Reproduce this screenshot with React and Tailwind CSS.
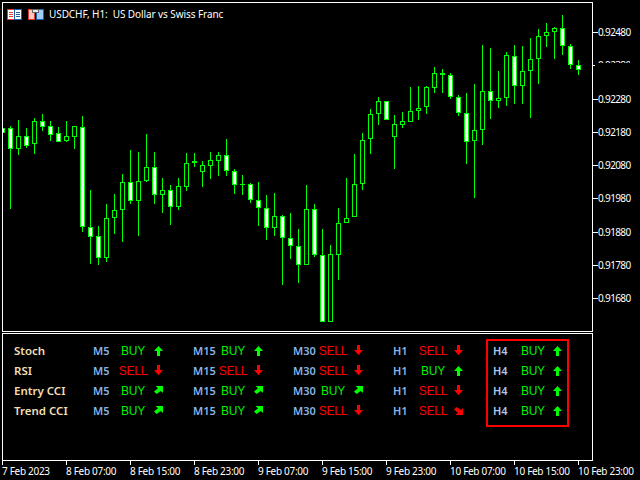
const candles = [
  [2, 120, 140, 128, 133, 1],
  [10, 126, 209, 128, 149, 1],
  [18, 120, 155, 136, 149, 0],
  [26, 128, 148, 136, 146, 1],
  [34, 118, 154, 121, 144, 0],
  [42, 114, 131, 121, 127, 1],
  [50, 121, 141, 126, 135, 1],
  [58, 127, 142, 133, 142, 1],
  [66, 121, 142, 136, 141, 0],
  [74, 126, 149, 126, 137, 0],
  [82, 116, 232, 127, 227, 1],
  [90, 190, 264, 227, 237, 1],
  [98, 226, 265, 236, 258, 1],
  [106, 204, 262, 218, 258, 0],
  [114, 194, 234, 210, 218, 0],
  [122, 174, 242, 182, 210, 0],
  [130, 150, 204, 182, 201, 1],
  [138, 152, 236, 181, 201, 0],
  [146, 134, 182, 167, 181, 0],
  [154, 152, 204, 167, 195, 1],
  [162, 178, 213, 190, 195, 0],
  [170, 185, 225, 190, 207, 1],
  [178, 178, 210, 186, 207, 0],
  [186, 153, 191, 163, 187, 0],
  [194, 153, 167, 161, 163, 0],
  [202, 161, 187, 165, 172, 0],
  [210, 152, 179, 160, 166, 0],
  [218, 152, 176, 155, 161, 0],
  [226, 139, 176, 155, 171, 1],
  [234, 169, 194, 171, 185, 1],
  [242, 175, 195, 184, 185, 2],
  [250, 183, 203, 184, 200, 1],
  [258, 182, 226, 200, 208, 1],
  [266, 195, 240, 208, 228, 1],
  [274, 193, 236, 216, 228, 0],
  [282, 215, 285, 216, 238, 1],
  [290, 213, 259, 238, 246, 1],
  [298, 229, 283, 246, 265, 1],
  [306, 185, 265, 209, 265, 0],
  [314, 204, 257, 209, 255, 1],
  [322, 229, 322, 255, 322, 1],
  [330, 245, 322, 254, 322, 0],
  [338, 208, 280, 223, 255, 0],
  [346, 178, 223, 218, 223, 0],
  [354, 154, 217, 184, 217, 0],
  [362, 133, 190, 140, 184, 0],
  [370, 109, 154, 114, 139, 0],
  [378, 97, 125, 101, 114, 0],
  [386, 101, 120, 101, 120, 1],
  [394, 115, 169, 124, 137, 0],
  [402, 112, 128, 121, 125, 0],
  [410, 87, 122, 111, 122, 0],
  [418, 86, 120, 108, 111, 0],
  [426, 86, 114, 87, 107, 0],
  [434, 67, 93, 73, 88, 0],
  [442, 69, 93, 73, 75, 1],
  [450, 73, 99, 75, 97, 1],
  [458, 95, 116, 97, 113, 1],
  [466, 93, 164, 113, 142, 1],
  [474, 84, 198, 130, 141, 0],
  [482, 45, 145, 91, 130, 0],
  [490, 48, 119, 91, 101, 1],
  [498, 71, 108, 98, 101, 0],
  [506, 52, 106, 55, 98, 0],
  [514, 45, 104, 56, 86, 1],
  [522, 46, 104, 71, 86, 0],
  [530, 38, 118, 59, 71, 0],
  [538, 29, 84, 36, 59, 0],
  [546, 23, 47, 32, 36, 0],
  [554, 27, 59, 28, 32, 0],
  [562, 15, 55, 28, 46, 1],
  [570, 44, 69, 46, 65, 1],
  [578, 60, 75, 65, 70, 1],
];

const prices = ["0.92480", "0.92380", "0.92280", "0.92180", "0.92080", "0.91980", "0.91880", "0.91780", "0.91680"];
const times = ["7 Feb 2023", "8 Feb 07:00", "8 Feb 15:00", "8 Feb 23:00", "9 Feb 07:00", "9 Feb 15:00", "9 Feb 23:00", "10 Feb 07:00", "10 Feb 15:00", "10 Feb 23:00"];

const ui = { fontFamily: '"Noto Sans", sans-serif' };

const arrows = {
  up: { c: "#00ff00", w: 9, h: 10, cls: "block", d: "M4.5 0 L9 5 L6 5 L6 10 L3 10 L3 5 L0 5 Z" },
  down: { c: "#ff0000", w: 9, h: 10, cls: "block mb-[3px]", d: "M3 0 L6 0 L6 5 L9 5 L4.5 10 L0 5 L3 5 Z" },
  ne: { c: "#00ff00", w: 9, h: 8, cls: "block mb-[2px]", d: "M1.5 0 L9 0 L9 7 L6.8 5 L2.6 8 L0 5.6 L4 2.2 Z" },
  se: { c: "#ff0000", w: 9, h: 8, cls: "block mb-[1px]", d: "M0 2.4 L2.6 0 L6.8 3 L9 1 L9 8 L1.5 8 L4 5.8 Z" },
};

function Arrow({ k }) {
  const a = arrows[k];
  return (
    <svg width={a.w} height={a.h} viewBox={`0 0 ${a.w} ${a.h}`} className={a.cls}>
      <path d={a.d} fill={a.c} />
    </svg>
  );
}

function Chart() {
  return (
    <svg width="589" height="328" viewBox="3 3 589 328" className="block" shapeRendering="crispEdges">
      {candles.map(([x, hi, lo, top, bot, kind]) => (
        <g key={x}>
          <rect x={x} y={hi} width="1" height={lo - hi} fill="#00ff00" />
          {kind === 2 ? (
            <rect x={x - 2} y={top} width="5" height={bot - top} fill="#00ff00" />
          ) : (
            <rect
              x={x - 1.5}
              y={top + 0.5}
              width="4"
              height={Math.max(bot - top - 1, 1)}
              fill={kind === 1 ? "#ffffff" : "#000000"}
              stroke="#00ff00"
              strokeWidth="1"
            />
          )}
        </g>
      ))}
    </svg>
  );
}

function BookIcon() {
  return (
    <svg width="15" height="11" viewBox="0 0 15 11" className="block" shapeRendering="crispEdges">
      <rect x="0.5" y="0.5" width="7" height="10" fill="#fff" stroke="#e03a30" />
      <rect x="7.5" y="0.5" width="7" height="10" fill="#fff" stroke="#1d5fa8" />
      <path d="M2 3.5h4M2 5.5h4M2 7.5h4" stroke="#e03a30" />
      <path d="M9 3.5h4M9 5.5h4M9 7.5h4" stroke="#1d5fa8" />
    </svg>
  );
}

function SaveIcon() {
  return (
    <svg width="16" height="11" viewBox="0 0 16 11" className="block" shapeRendering="crispEdges">
      <rect x="0.5" y="0.5" width="6" height="10" fill="#ffc9c0" stroke="#e03a30" />
      <rect x="8.5" y="0.5" width="7" height="10" fill="#9fd0f5" stroke="#1d5fa8" />
      <rect x="4" y="0" width="7" height="4" fill="#666" />
      <rect x="5" y="1" width="5" height="2" fill="#e8e8e8" />
    </svg>
  );
}

const labels = ["Stoch", "RSI", "Entry CCI", "Trend CCI"];

const columns = [
  { tf: "M5", rows: [["BUY", "up"], ["SELL", "down"], ["BUY", "ne"], ["BUY", "ne"]] },
  { tf: "M15", rows: [["BUY", "up"], ["SELL", "down"], ["BUY", "ne"], ["BUY", "ne"]] },
  { tf: "M30", rows: [["SELL", "down"], ["SELL", "down"], ["BUY", "ne"], ["SELL", "down"]] },
  { tf: "H1", rows: [["SELL", "down"], ["BUY", "up"], ["SELL", "down"], ["SELL", "se"]] },
];

const sig = { fontFamily: '"Liberation Sans", sans-serif' };

function SignalRow({ tf, signal, arrow }) {
  return (
    <div className="flex h-5 items-center">
      <span className="w-[23px] shrink-0 whitespace-nowrap text-[11px] font-semibold text-[#86b4e6]">{tf}</span>
      <span
        style={sig}
        className={
          signal === "BUY"
            ? "w-[34px] shrink-0 text-center text-[12px] tracking-[-0.3px] text-[#00f000]"
            : "w-[34px] shrink-0 text-center text-[12px] tracking-[-0.2px] text-[#ff0000]"
        }
      >
        {signal}
      </span>
      <span className="ml-[4px]">
        <Arrow k={arrow} />
      </span>
    </div>
  );
}

export default function App() {
  return (
    <div className="flex h-[480px] w-[640px] flex-col overflow-hidden bg-black pl-[2px] pt-[2px] text-white" style={ui}>
      <div className="flex h-[330px]">
        <div className="relative h-[330px] w-[591px] border border-white">
          <Chart />
          <div className="absolute left-[4px] top-[5px] flex items-center">
            <BookIcon />
            <span className="ml-[6px]"><SaveIcon /></span>
            <span className="ml-[5px] whitespace-pre text-[10px] leading-[12px] tracking-[-0.08px]">USDCHF, H1:  US Dollar vs Swiss Franc</span>
          </div>
        </div>
        <div className="flex flex-col pt-[22px]">
          {prices.map((p, i) =>
            i === 1 ? (
              <div key={p} className="flex h-[33.3px] items-start">
                <div className="mt-[8px] h-px w-[2px] bg-white" />
                <div className="ml-[3px] h-[6px] overflow-hidden text-[10px] leading-[16px] tracking-[-0.65px]">{p}</div>
              </div>
            ) : (
              <div key={p} className="flex h-[33.3px] items-start">
                <div className="mt-[8px] h-px w-[5px] bg-white" />
                <div className="h-4 text-[10px] leading-[16px] tracking-[-0.65px]">{p}</div>
              </div>
            )
          )}
        </div>
      </div>
      <div className="mt-px h-[128px] w-[591px] border border-white">
        <div className="flex pl-[11px] pt-[5px]">
          <div className="mt-[2px] w-[79px]">
            {labels.map((l) => (
              <div key={l} className="flex h-5 items-center whitespace-nowrap text-[11.5px] font-semibold text-[#f0deb0]">{l}</div>
            ))}
          </div>
          {columns.map((col) => (
            <div key={col.tf} className="mt-[2px] w-[100px]">
              {col.rows.map(([s, a], i) => (
                <SignalRow key={i} tf={col.tf} signal={s} arrow={a} />
              ))}
            </div>
          ))}
          <div className="-ml-[7px] h-[88px] w-[83px] border-2 border-[#ff0000] pl-[5px]">
            {[0, 1, 2, 3].map((i) => (
              <div key={i} className="flex h-5 items-center">
                <span className="w-[28px] shrink-0 text-[11px] font-semibold text-[#a9c6e8]">H4</span>
                <span style={sig} className="w-[23px] shrink-0 text-left text-[12px] tracking-[-0.3px] text-[#00f000]">BUY</span>
                <span className="ml-[9px]"><Arrow k="up" /></span>
              </div>
            ))}
          </div>
        </div>
      </div>
      <div className="flex">
        {times.map((t) => (
          <div key={t} className="w-[64px] shrink-0">
            <div className="h-[4px] w-px bg-white" />
            <div className="whitespace-nowrap text-[10px] leading-[12px] tracking-[-0.3px]">{t}</div>
          </div>
        ))}
      </div>
    </div>
  );
}
